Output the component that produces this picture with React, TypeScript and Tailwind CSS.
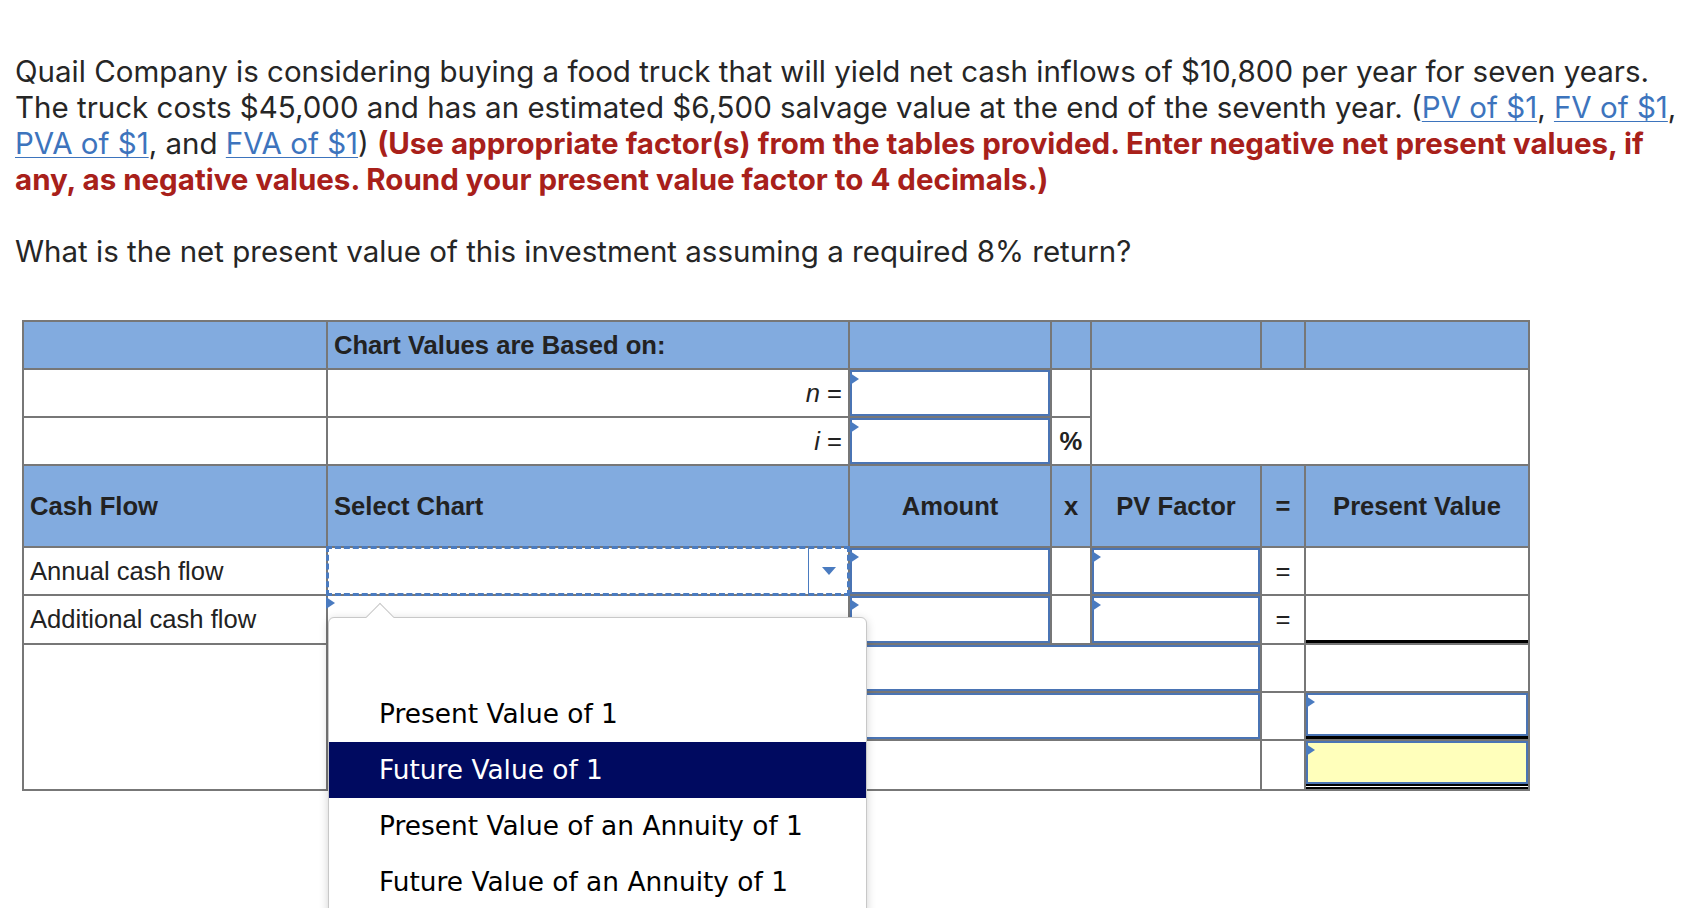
import React from 'react'

function Marker() {
  return (
    <span className="absolute left-[-2px] top-[1px] h-0 w-0 border-y-[6px] border-l-[9px] border-y-transparent border-l-[#4a7bc0]" />
  )
}

function Field({ yellow = false }: { yellow?: boolean }) {
  return (
    <div className={yellow ? 'relative h-full w-full border-2 border-[#4a74b4] bg-[#ffffbb]' : 'relative h-full w-full border-2 border-[#4a74b4] bg-white'}>
      <Marker />
    </div>
  )
}

function Link({ children }: { children: React.ReactNode }) {
  return <a className="text-[#3d74bd] underline decoration-[#3d74bd] decoration-1 underline-offset-[3px]">{children}</a>
}

const options = ['', 'Present Value of 1', 'Future Value of 1', 'Present Value of an Annuity of 1', 'Future Value of an Annuity of 1']

export default function App() {
  return (
    <div className="h-screen overflow-hidden bg-white text-[#262626]">
      {/* question */}
      <div className="pl-[15px] pt-[53px] font-['Inter',sans-serif] text-[29.5px] leading-[36px]">
        <p className="whitespace-nowrap">
          Quail Company is considering buying a food truck that will yield net cash inflows of $10,800 per year for seven years.
          <br />
          The truck costs $45,000 and has an estimated $6,500 salvage value at the end of the seventh year. (<Link>PV of $1</Link>, <Link>FV of $1</Link>,
          <br />
          <Link>PVA of $1</Link>, and <Link>FVA of $1</Link>){' '}
          <span className="font-bold text-[#a8201a]">
            (Use appropriate factor(s) from the tables provided. Enter negative net present values, if
            <br />
            any, as negative values. Round your present value factor to 4 decimals.)
          </span>
        </p>
        <p className="mt-[36px] whitespace-nowrap">What is the net present value of this investment assuming a required 8% return?</p>
      </div>

      {/* worksheet */}
      <div className="relative ml-[22px] mt-[51px] w-fit">
        <div className="grid w-fit grid-cols-[302px_520px_200px_38px_168px_42px_222px] grid-rows-[46px_46px_46px_80px_46px_47px_46px_46px_48px] gap-[2px] border-2 border-[#777] bg-[#777] font-['Liberation_Sans',Arial,sans-serif] text-[25.6px] text-[#222]">
          {/* row 1 */}
          <div className="bg-[#82abdf]" />
          <div className="flex items-center bg-[#82abdf] px-[6px] font-bold">Chart Values are Based on:</div>
          <div className="bg-[#82abdf]" />
          <div className="bg-[#82abdf]" />
          <div className="bg-[#82abdf]" />
          <div className="bg-[#82abdf]" />
          <div className="bg-[#82abdf]" />

          {/* n */}
          <div className="bg-white" />
          <div className="flex items-center justify-end bg-white pr-[6px]">
            <span className="italic">n</span>&nbsp;=
          </div>
          <div className="bg-white">
            <Field />
          </div>
          <div className="bg-white" />
          <div className="col-span-3 row-span-2 bg-white" />

          {/* i */}
          <div className="bg-white" />
          <div className="flex items-center justify-end bg-white pr-[6px]">
            <span className="italic">i</span>&nbsp;=
          </div>
          <div className="bg-white">
            <Field />
          </div>
          <div className="flex items-center justify-center bg-white font-bold">%</div>

          {/* column headers */}
          <div className="flex items-center bg-[#82abdf] px-[6px] font-bold">Cash Flow</div>
          <div className="flex items-center bg-[#82abdf] px-[6px] font-bold">Select Chart</div>
          <div className="flex items-center justify-center bg-[#82abdf] font-bold">Amount</div>
          <div className="flex items-center justify-center bg-[#82abdf] font-bold">x</div>
          <div className="flex items-center justify-center bg-[#82abdf] font-bold">PV Factor</div>
          <div className="flex items-center justify-center bg-[#82abdf] font-bold">=</div>
          <div className="flex items-center justify-center bg-[#82abdf] font-bold">Present Value</div>

          {/* annual */}
          <div className="flex items-center bg-white px-[6px]">Annual cash flow</div>
          <div className="relative flex bg-white">
            <div className="flex-1" />
            <div className="flex w-[40px] items-center justify-center border-l border-[#4a7bc0]">
              <span className="h-0 w-0 border-x-[7px] border-t-[8px] border-x-transparent border-t-[#4a7bc0]" />
            </div>
            <div className="absolute inset-[-2px] border-[3px] border-dashed border-[#4a7bc0]" />
          </div>
          <div className="bg-white">
            <Field />
          </div>
          <div className="bg-white" />
          <div className="bg-white">
            <Field />
          </div>
          <div className="flex items-center justify-center bg-white">=</div>
          <div className="bg-white" />

          {/* additional */}
          <div className="flex items-center bg-white px-[6px]">Additional cash flow</div>
          <div className="relative bg-white">
            <Marker />
          </div>
          <div className="bg-white">
            <Field />
          </div>
          <div className="bg-white" />
          <div className="bg-white">
            <Field />
          </div>
          <div className="flex items-center justify-center bg-white">=</div>
          <div className="border-b-[3px] border-black bg-white" />

          {/* totals */}
          <div className="row-span-3 bg-white" />
          <div className="col-span-4 bg-white">
            <Field />
          </div>
          <div className="bg-white" />
          <div className="bg-white" />

          <div className="col-span-4 bg-white">
            <Field />
          </div>
          <div className="bg-white" />
          <div className="flex flex-col border-b-[3px] border-black bg-white">
            <Field />
          </div>

          <div className="col-span-4 bg-white" />
          <div className="bg-white" />
          <div className="flex flex-col border-b-[5px] border-double border-black bg-white">
            <Field yellow />
          </div>
        </div>

        {/* chart dropdown */}
        <div className="absolute left-[306px] top-[297px] h-[340px] w-[539px] rounded-t-[6px] border border-[#c8c8c8] bg-white pt-[12px] font-['DejaVu_Sans',Verdana,sans-serif] text-[26.4px] text-black shadow-[0_2px_10px_rgba(0,0,0,0.18)]">
          <div className="absolute left-[41px] top-[-11px] h-[20px] w-[20px] rotate-45 border-l border-t border-[#c8c8c8] bg-white" />
          {options.map((o, i) => (
            <div
              key={i}
              className={i === 2 ? 'relative flex h-[56px] items-center bg-[#000a60] pl-[50px] text-white' : 'relative flex h-[56px] items-center pl-[50px]'}
            >
              {o}
            </div>
          ))}
        </div>
      </div>
    </div>
  )
}
